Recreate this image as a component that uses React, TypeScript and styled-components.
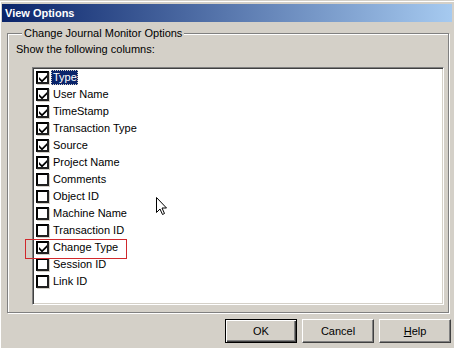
import React from 'react';
import styled, { createGlobalStyle } from 'styled-components';

const GlobalStyle = createGlobalStyle`
  html, body {
    margin: 0;
    padding: 0;
    background: #d4d0c8;
  }
  * {
    box-sizing: border-box;
  }
`;

const columns = [
  { name: 'Type', checked: true, selected: true },
  { name: 'User Name', checked: true },
  { name: 'TimeStamp', checked: true },
  { name: 'Transaction Type', checked: true },
  { name: 'Source', checked: true },
  { name: 'Project Name', checked: true },
  { name: 'Comments', checked: false },
  { name: 'Object ID', checked: false },
  { name: 'Machine Name', checked: false },
  { name: 'Transaction ID', checked: false },
  { name: 'Change Type', checked: true },
  { name: 'Session ID', checked: false },
  { name: 'Link ID', checked: false },
];

const App: React.FC = () => {
  return (
    <>
      <GlobalStyle />
      <Window>
        <TitleBar>View Options</TitleBar>
        <Body>
          <Group>
            <GroupTitle>Change Journal Monitor Options</GroupTitle>
            <Caption>Show the following columns:</Caption>
            <ListBox>
              {columns.map((col) => (
                <Row key={col.name}>
                  <CheckBox>
                    {col.checked && (
                      <svg width="8" height="8" viewBox="0 0 8 8">
                        <path d="M0 3 L3 6 L8 1 L8 3.5 L3 8.5 L0 5.5 Z" fill="#000" />
                      </svg>
                    )}
                  </CheckBox>
                  <ItemLabel $selected={!!col.selected}>{col.name}</ItemLabel>
                </Row>
              ))}
            </ListBox>
          </Group>
          <ButtonRow>
            <Button $default>OK</Button>
            <Button>Cancel</Button>
            <Button>
              <u>H</u>elp
            </Button>
          </ButtonRow>
        </Body>

        <Highlight />
        <Cursor>
          <svg width="12" height="19" viewBox="0 0 12 19">
            <path
              d="M0.5 0.5 L0.5 15.5 L4 12 L6.5 17.5 L8.5 16.5 L6 11 L10.5 11 Z"
              fill="#fff"
              stroke="#000"
              strokeWidth="1"
              strokeLinejoin="miter"
            />
          </svg>
        </Cursor>
      </Window>
    </>
  );
};

const Window = styled.div`
  position: relative;
  width: 454px;
  height: 348px;
  padding: 3px 2px 0 2px;
  background: #d4d0c8;
  border-top: 1px solid #d4d0c8;
  box-shadow: inset 1px 1px 0 #fff;
  font-family: Tahoma, 'Liberation Sans', Arial, sans-serif;
  font-size: 11px;
  color: #000;
  display: flex;
  flex-direction: column;
`;

const TitleBar = styled.div`
  height: 18px;
  padding-left: 3px;
  display: flex;
  align-items: center;
  background: linear-gradient(to right, #0a246a, #a6caf0);
  color: #fff;
  font-weight: bold;
  font-size: 11px;
`;

const Body = styled.div`
  display: flex;
  flex-direction: column;
  padding: 0 1px 0 5px;
`;

const Group = styled.fieldset`
  margin: 5px 2px 0 0;
  padding: 3px 4px 7px 8px;
  border: 1px solid #808080;
  box-shadow: 1px 1px 0 #fff, inset 1px 1px 0 #fff;
  min-width: 0;
  display: flex;
  flex-direction: column;
`;

const GroupTitle = styled.legend`
  margin-left: 6px;
  padding: 0 2px;
  line-height: 13px;
  background: #d4d0c8;
`;

const Caption = styled.div`
  line-height: 13px;
  margin-bottom: 11px;
`;

const ListBox = styled.div`
  margin-left: 16px;
  height: 238px;
  padding: 1px 1px;
  background: #fff;
  border: 1px solid;
  border-color: #808080 #fff #fff #808080;
  box-shadow: inset 1px 1px 0 #404040, inset -1px -1px 0 #d4d0c8;
  display: flex;
  flex-direction: column;
`;

const Row = styled.div`
  height: 17px;
  padding-left: 2px;
  display: flex;
  align-items: center;
`;

const CheckBox = styled.span`
  width: 13px;
  height: 13px;
  flex: none;
  background: #fff;
  border: 2px solid #000;
  border-right-color: #202020;
  border-bottom-color: #202020;
  box-shadow: 1px 1px 0 #d4d0c8;
  display: flex;
  align-items: center;
  justify-content: center;
`;

const ItemLabel = styled.span<{ $selected: boolean }>`
  margin-left: 2px;
  padding: 0 1px 0 2px;
  line-height: 15px;
  white-space: nowrap;
  background: ${(p) => (p.$selected ? '#0a246a' : 'transparent')};
  color: ${(p) => (p.$selected ? '#fff' : '#000')};
  outline: ${(p) => (p.$selected ? '1px dotted #d4d0c8' : 'none')};
  outline-offset: -1px;
`;

const ButtonRow = styled.div`
  margin-top: 6px;
  display: flex;
  justify-content: flex-end;
  gap: 5px;
`;

const Button = styled.button<{ $default?: boolean }>`
  width: 72px;
  height: 24px;
  padding: 0;
  font-family: inherit;
  font-size: 11px;
  color: #000;
  background: #d4d0c8;
  border: 1px solid;
  border-color: ${(p) => (p.$default ? '#000' : '#fff #404040 #404040 #fff')};
  box-shadow: ${(p) =>
    p.$default
      ? 'inset 1px 1px 0 #fff, inset -1px -1px 0 #404040, inset -2px -2px 0 #808080'
      : 'inset -1px -1px 0 #808080'};
  display: flex;
  align-items: center;
  justify-content: center;

  u {
    text-decoration: underline;
  }
`;

const Highlight = styled.div`
  position: absolute;
  left: 25px;
  top: 238px;
  width: 102px;
  height: 20px;
  border: 1px solid #d0282c;
  pointer-events: none;
`;

const Cursor = styled.div`
  position: absolute;
  left: 156px;
  top: 196px;
  width: 12px;
  height: 19px;
  pointer-events: none;
`;

export default App;
